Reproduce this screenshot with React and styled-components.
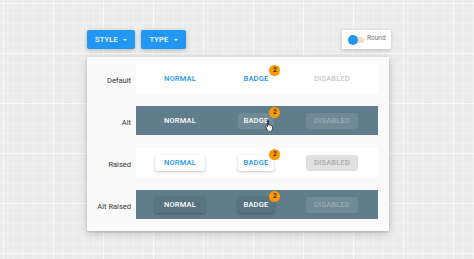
import React from "react";
import styled, { createGlobalStyle, css } from "styled-components";

const Global = createGlobalStyle`
  html, body { margin: 0; padding: 0; }
  body {
    font-family: Roboto, "Liberation Sans", sans-serif;
    background-color: #ececec;
    background-image:
      linear-gradient(to right, rgba(255,255,255,0.55) 1px, transparent 1px),
      linear-gradient(to bottom, rgba(255,255,255,0.55) 1px, transparent 1px),
      linear-gradient(to right, rgba(255,255,255,0.25) 1px, transparent 1px),
      linear-gradient(to bottom, rgba(255,255,255,0.25) 1px, transparent 1px);
    background-size: 50px 50px, 50px 50px, 10px 10px, 10px 10px;
    background-position: 3px 3px, 3px 3px, 3px 3px, 3px 3px;
  }
`;

const Page = styled.div`
  width: 474px;
  height: 259px;
  box-sizing: border-box;
  padding: 30px 83px 0 87px;
`;

const TopBar = styled.div`
  display: flex;
  align-items: center;
  gap: 6px;
  height: 19px;
`;

const MenuButton = styled.button`
  display: flex;
  align-items: center;
  justify-content: center;
  gap: 5px;
  height: 19px;
  width: ${(p) => p.$w}px;
  padding: 0;
  border: none;
  border-radius: 2px;
  background: #2196f3;
  color: #fff;
  font-family: Roboto, "Liberation Sans", sans-serif;
  font-size: 7.5px;
  font-weight: 500;
  letter-spacing: 0.2px;
  box-shadow: 0 1px 4px rgba(0, 0, 0, 0.25);
`;

const Caret = styled.span`
  width: 0;
  height: 0;
  border-left: 2.5px solid transparent;
  border-right: 2.5px solid transparent;
  border-top: 2.5px solid #fff;
`;

const ToggleCard = styled.div`
  margin-left: auto;
  width: 49px;
  height: 19px;
  box-sizing: border-box;
  background: #fff;
  box-shadow: 0 1px 4px rgba(0, 0, 0, 0.2);
  display: flex;
  align-items: flex-start;
  padding: 4px 0 0 6px;
  gap: 3px;
`;

const Switch = styled.div`
  position: relative;
  width: 16px;
  height: 10px;
  margin-top: 1px;
`;

const Track = styled.div`
  position: absolute;
  left: 4px;
  top: 2px;
  width: 12px;
  height: 6px;
  border-radius: 3px;
  background: #f1dcc4;
`;

const Thumb = styled.div`
  position: absolute;
  left: 0;
  top: 0;
  width: 10px;
  height: 10px;
  border-radius: 50%;
  background: #2196f3;
`;

const ToggleLabel = styled.span`
  font-size: 6.5px;
  color: #777;
  line-height: 8px;
`;

const Card = styled.div`
  margin-top: 8px;
  width: 302px;
  box-sizing: border-box;
  background: #fafafa;
  box-shadow: 0 2px 8px rgba(0, 0, 0, 0.22), 0 1px 2px rgba(0, 0, 0, 0.12);
  padding: 7px 11px 12px 0;
  display: grid;
  grid-template-columns: 44px 242px;
  column-gap: 5px;
  row-gap: 13px;
`;

const Label = styled.div`
  font-size: 7.5px;
  color: #333;
  text-align: right;
  align-self: center;
  padding-top: 3px;
`;

const Band = styled.div`
  height: 29px;
  background: ${(p) => (p.$alt ? "#607d8b" : "#ffffff")};
  display: grid;
  grid-template-columns: repeat(3, 1fr);
  align-items: center;
  justify-items: center;
  padding: 0 8px 0 6px;
`;

const Btn = styled.div`
  position: relative;
  height: 16px;
  box-sizing: border-box;
  padding: 0 ${(p) => p.$px || 9}px;
  display: flex;
  align-items: center;
  justify-content: center;
  font-size: 7.5px;
  font-weight: 500;
  letter-spacing: 0.2px;
  border-radius: 2px;
  color: ${(p) => (p.$alt ? "#ffffff" : "#2196f3")};
  ${(p) =>
    p.$raised &&
    css`
      background: ${p.$alt ? "#587481" : "#ffffff"};
      box-shadow: 0 1px 3px rgba(0, 0, 0, ${p.$alt ? 0.3 : 0.22});
    `}
  ${(p) =>
    p.$hover &&
    css`
      background: rgba(255, 255, 255, 0.1);
    `}
  ${(p) =>
    p.$disabled &&
    css`
      box-shadow: none;
      color: ${p.$alt ? "rgba(255,255,255,0.3)" : p.$raised ? "#ababab" : "#c8c8c8"};
      background: ${p.$alt ? "rgba(255,255,255,0.1)" : p.$raised ? "#e0e0e0" : "transparent"};
    `}
`;

const Badge = styled.span`
  position: absolute;
  top: -6px;
  right: -6px;
  width: 11px;
  height: 11px;
  border-radius: 50%;
  background: #ff9800;
  color: #333;
  font-size: 6.5px;
  font-weight: 700;
  display: flex;
  align-items: center;
  justify-content: center;
`;

const Cursor = styled.svg`
  position: absolute;
  left: 27px;
  top: 7px;
  width: 9px;
  height: 11px;
`;

const HandCursor = () => (
  <Cursor viewBox="0 0 9 11">
    <path
      d="M2.5 0.8c.5 0 .9.4.9.9v3.2l.2-.1c.4-.2.9 0 1.1.3.3-.2.8-.1 1 .3.3-.2.8 0 1 .4.4-.1.9.2.9.7v2.2c0 1.4-1 2.6-2.4 2.6H4.2c-.8 0-1.4-.4-1.8-1L.9 6.8c-.3-.4-.2-.9.2-1.1.3-.2.7-.1 1 .2l.5.6V1.7c0-.5.4-.9.9-.9z"
      fill="#fff"
      stroke="#000"
      strokeWidth="0.7"
    />
  </Cursor>
);

const rows = [
  { label: "Default", alt: false, raised: false },
  { label: "Alt", alt: true, raised: false, hover: true },
  { label: "Raised", alt: false, raised: true },
  { label: "Alt Raised", alt: true, raised: true },
];

export default function App() {
  return (
    <>
      <Global />
      <Page>
        <TopBar>
          <MenuButton $w={48}>
            STYLE <Caret />
          </MenuButton>
          <MenuButton $w={45}>
            TYPE <Caret />
          </MenuButton>
          <ToggleCard>
            <Switch>
              <Track />
              <Thumb />
            </Switch>
            <ToggleLabel>Round</ToggleLabel>
          </ToggleCard>
        </TopBar>
        <Card>
          {rows.map((r) => (
            <React.Fragment key={r.label}>
              <Label>{r.label}</Label>
              <Band $alt={r.alt}>
                <Btn $alt={r.alt} $raised={r.raised}>
                  NORMAL
                </Btn>
                <Btn $alt={r.alt} $raised={r.raised} $hover={r.hover} $px={6}>
                  BADGE
                  <Badge>2</Badge>
                  {r.hover && <HandCursor />}
                </Btn>
                <Btn $alt={r.alt} $raised={r.raised} $disabled $px={8}>
                  DISABLED
                </Btn>
              </Band>
            </React.Fragment>
          ))}
        </Card>
      </Page>
    </>
  );
}
